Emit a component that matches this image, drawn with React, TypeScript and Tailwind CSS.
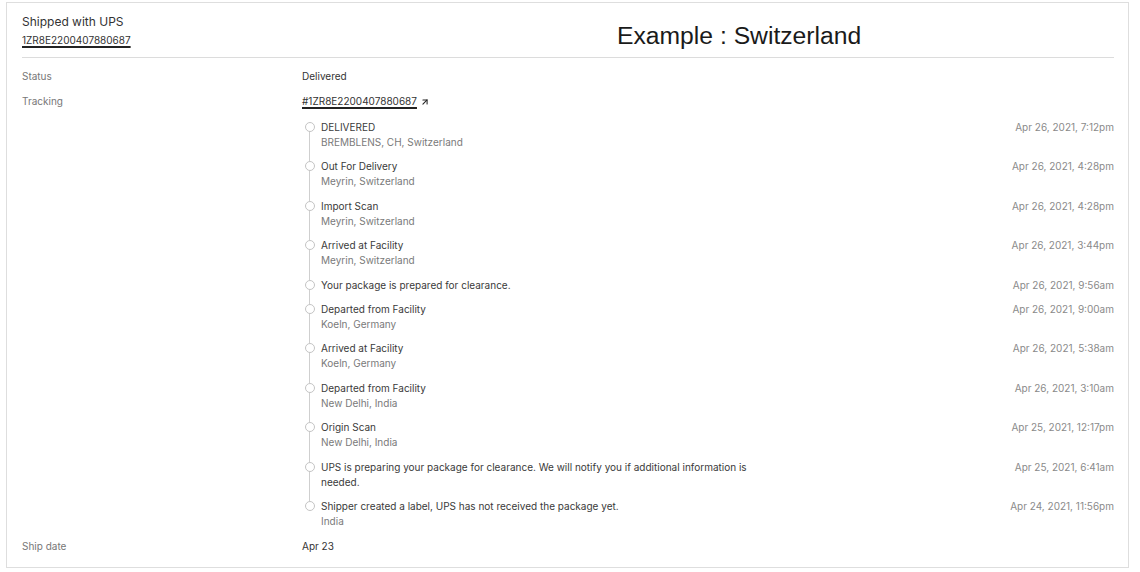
import { ArrowUpRight } from "lucide-react";

type TrackingEvent = {
  title: string;
  place?: string;
  time: string;
};

const events: TrackingEvent[] = [
  { title: "DELIVERED", place: "BREMBLENS, CH, Switzerland", time: "Apr 26, 2021, 7:12pm" },
  { title: "Out For Delivery", place: "Meyrin, Switzerland", time: "Apr 26, 2021, 4:28pm" },
  { title: "Import Scan", place: "Meyrin, Switzerland", time: "Apr 26, 2021, 4:28pm" },
  { title: "Arrived at Facility", place: "Meyrin, Switzerland", time: "Apr 26, 2021, 3:44pm" },
  { title: "Your package is prepared for clearance.", time: "Apr 26, 2021, 9:56am" },
  { title: "Departed from Facility", place: "Koeln, Germany", time: "Apr 26, 2021, 9:00am" },
  { title: "Arrived at Facility", place: "Koeln, Germany", time: "Apr 26, 2021, 5:38am" },
  { title: "Departed from Facility", place: "New Delhi, India", time: "Apr 26, 2021, 3:10am" },
  { title: "Origin Scan", place: "New Delhi, India", time: "Apr 25, 2021, 12:17pm" },
  {
    title: "UPS is preparing your package for clearance. We will notify you if additional information is needed.",
    time: "Apr 25, 2021, 6:41am",
  },
  { title: "Shipper created a label, UPS has not received the package yet.", place: "India", time: "Apr 24, 2021, 11:56pm" },
];

function TimelineItem({ event, last }: { event: TrackingEvent; last: boolean }) {
  return (
    <div className="relative flex justify-between pl-[19px] pb-[9.4px]">
      {/* connector down to the next stop */}
      {!last && <div className="absolute left-[7px] top-[8px] bottom-[-2px] w-px bg-[#cfcfcf]" />}
      <div className="absolute left-[3px] top-[2px] w-[10px] h-[10px] rounded-full border border-[#c4c4c4] bg-white" />
      <div className="w-[440px] leading-[15px]">
        <div className="text-[#3a3a3a]">{event.title}</div>
        {event.place && <div className="text-[#7a7a7a]">{event.place}</div>}
      </div>
      <div className="leading-[15px] text-[#8a8a8a]">{event.time}</div>
    </div>
  );
}

export default function App() {
  return (
    <div className="min-h-screen bg-white pt-[2px] pl-[6px] font-['Inter','Liberation_Sans',sans-serif] text-[10px]">
      <div className="w-[1123px] h-[566px] border border-[#dedede] pl-[15px] pr-[14px] pt-[11px]">
        {/* header */}
        <div className="flex items-start h-[44px] border-b border-[#dcdcdc]">
          <div className="w-[595px]">
            <div className="text-[12px] leading-[16px] text-[#333]">Shipped with UPS</div>
            <div className="mt-[3px] leading-[14px]">
              <span className="text-[#333] underline decoration-[#222] decoration-[1.5px] underline-offset-[2px]">
                1ZR8E2200407880687
              </span>
            </div>
          </div>
          <div className="mt-[7px] font-['Liberation_Sans',Arial,sans-serif] text-[24.7px] leading-[30px] text-[#1a1a1a]">
            Example : Switzerland
          </div>
        </div>

        {/* details */}
        <div className="pt-[6px]">
          <div className="flex h-[25px] items-center">
            <div className="w-[280px] text-[#777]">Status</div>
            <div className="text-[#333]">Delivered</div>
          </div>
          <div className="flex h-[25px] items-center">
            <div className="w-[280px] text-[#777]">Tracking</div>
            <div className="flex items-center gap-[3px] text-[#333]">
              <span className="underline decoration-[#222] decoration-[1.5px] underline-offset-[2px]">
                #1ZR8E2200407880687
              </span>
              <ArrowUpRight size={10} strokeWidth={2.5} className="text-[#222]" />
            </div>
          </div>

          <div className="flex mt-[6px]">
            <div className="w-[280px]" />
            <div className="flex-1">
              {events.map((e, i) => (
                <TimelineItem key={i} event={e} last={i === events.length - 1} />
              ))}
            </div>
          </div>

          <div className="flex h-[16px] items-center">
            <div className="w-[280px] text-[#777]">Ship date</div>
            <div className="text-[#333]">Apr 23</div>
          </div>
        </div>
      </div>
    </div>
  );
}
